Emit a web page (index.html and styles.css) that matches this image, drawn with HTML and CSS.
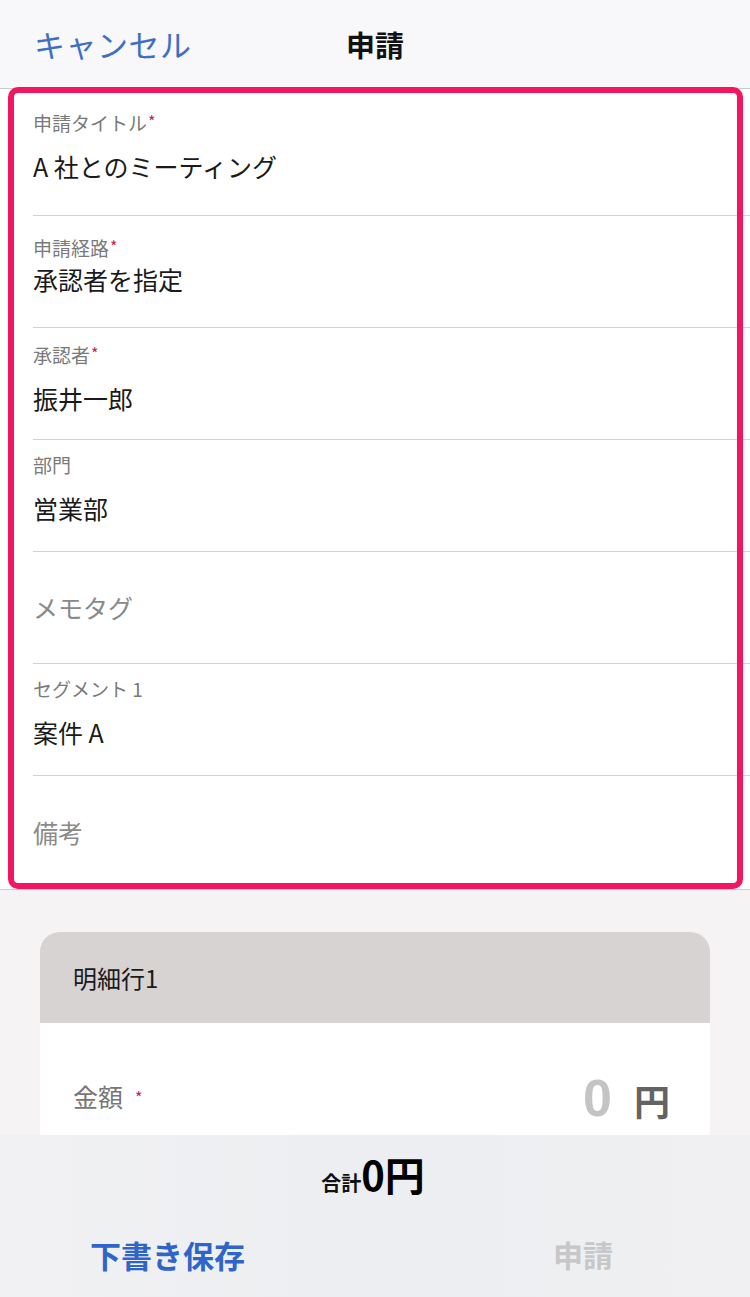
FILE: index.html
```html
<!DOCTYPE html>
<html lang="ja">
<head>
<meta charset="utf-8">
<title>申請</title>
<link rel="stylesheet" href="styles.css">
</head>
<body>
<div class="page">
  <header class="topbar">
    <span class="cancel">キャンセル</span>
    <span class="title">申請</span>
  </header>

  <section class="form">
    <div class="row row-first">
      <div class="label">申請タイトル<span class="req">*</span></div>
      <div class="value">A 社とのミーティング</div>
    </div>
    <div class="row row-tight">
      <div class="label">申請経路<span class="req">*</span></div>
      <div class="value">承認者を指定</div>
    </div>
    <div class="row">
      <div class="label">承認者<span class="req">*</span></div>
      <div class="value">振井一郎</div>
    </div>
    <div class="row">
      <div class="label">部門</div>
      <div class="value">営業部</div>
    </div>
    <div class="row row-placeholder">
      <div class="placeholder">メモタグ</div>
    </div>
    <div class="row">
      <div class="label">セグメント 1</div>
      <div class="value">案件 A</div>
    </div>
    <div class="row row-placeholder row-last">
      <div class="placeholder">備考</div>
    </div>
    <div class="highlight"></div>
  </section>

  <section class="details">
    <div class="card">
      <div class="card-head">明細行1</div>
      <div class="card-body">
        <div class="amount-row">
          <div class="amount-label">金額<span class="req req-gap">*</span></div>
          <div class="amount-value"><span class="num">0</span><span class="yen">円</span></div>
        </div>
      </div>
    </div>
  </section>

  <footer class="bottombar">
    <div class="total"><span class="total-label">合計</span><span class="total-value">0円</span></div>
    <div class="actions">
      <span class="draft">下書き保存</span>
      <span class="submit">申請</span>
    </div>
  </footer>
</div>
</body>
</html>
```

FILE: styles.css
```css
* { box-sizing: border-box; }
html, body {
  margin: 0;
  padding: 0;
}
body {
  width: 750px;
  height: 1297px;
  overflow: hidden;
  background: #f5f3f4;
  font-family: "Noto Sans CJK JP", "Noto Sans", sans-serif;
  color: #1a1a1a;
}
.page {
  position: relative;
  height: 1297px;
}

.topbar {
  height: 89px;
  background: #f8f7f9;
  border-bottom: 1px solid #c9c9c9;
  display: flex;
  align-items: center;
  position: relative;
  padding-left: 34px;
}
.cancel {
  font-size: 31px;
  color: #3d6fc3;
  line-height: 40px;
  letter-spacing: 0.5px;
}
.title {
  position: absolute;
  left: 0;
  right: 0;
  text-align: center;
  font-size: 29px;
  font-weight: 700;
  line-height: 40px;
  pointer-events: none;
  color: #111;
}

.form {
  position: relative;
  background: #fff;
  border-bottom: 1px solid #cfcfcf;
}
.row {
  margin-left: 33px;
  height: 112px;
  border-bottom: 1px solid #d2d2d2;
  display: flex;
  flex-direction: column;
  padding-top: 12px;
}
.row-first {
  height: 127px;
  padding-top: 19px;
}
.row-tight {
  padding-top: 17px;
}
.row-tight .value {
  margin-top: 0;
}
.row-last {
  border-bottom: none;
  height: 113px;
}
.label {
  font-size: 19px;
  line-height: 26px;
  color: #7a7a7a;
}
.req {
  color: #c2264a;
  font-size: 16px;
  vertical-align: 3px;
  margin-left: 1px;
}
.req-gap {
  margin-left: 12px;
}
.value {
  margin-top: 12px;
  font-size: 25px;
  line-height: 36px;
  color: #1a1a1a;
}
.row-placeholder {
  justify-content: center;
  padding-top: 0;
  padding-bottom: 2px;
}
.placeholder {
  font-size: 25px;
  line-height: 36px;
  color: #8a8a8a;
}

.highlight {
  position: absolute;
  left: 8px;
  top: -2px;
  width: 735px;
  height: 802px;
  border: 6px solid #f3155e;
  border-radius: 10px;
  pointer-events: none;
}

.details {
  padding: 42px 40px 0;
}
.card {
  border-radius: 20px 20px 0 0;
  overflow: hidden;
}
.card-head {
  height: 91px;
  background: #d8d3d3;
  display: flex;
  align-items: center;
  padding-left: 33px;
  font-size: 24px;
  color: #1a1a1a;
}
.card-body {
  background: #fff;
  height: 220px;
  padding: 0 40px 0 33px;
}
.amount-row {
  height: 146px;
  display: flex;
  align-items: center;
  justify-content: space-between;
}
.amount-label {
  font-size: 25px;
  color: #777;
  line-height: 36px;
}
.amount-value {
  display: flex;
  align-items: baseline;
  gap: 20px;
  margin-top: 4px;
}
.num {
  font-family: "Liberation Sans", "Noto Sans", sans-serif;
  font-size: 52px;
  font-weight: 700;
  color: #c4c4c4;
  letter-spacing: 2px;
}
.yen {
  font-size: 36px;
  font-weight: 700;
  color: #636363;
}

.bottombar {
  position: absolute;
  left: 0;
  right: 0;
  bottom: 0;
  height: 162px;
  background: linear-gradient(90deg, #f1f1f3 0%, #eceef1 50%, #f0f0f2 100%);
  display: flex;
  flex-direction: column;
  align-items: stretch;
}
.total {
  display: flex;
  justify-content: center;
  align-items: baseline;
  padding-top: 14px;
  padding-right: 4px;
  height: 80px;
}
.total-label {
  font-size: 20px;
  font-weight: 700;
  color: #111;
}
.total-value {
  font-size: 40px;
  font-weight: 700;
  color: #000;
  line-height: 50px;
}
.actions {
  display: flex;
  align-items: center;
  height: 82px;
  padding-bottom: 4px;
}
.draft {
  font-size: 31px;
  font-weight: 700;
  color: #2f65c9;
  margin-left: 90px;
}
.submit {
  font-size: 30px;
  font-weight: 700;
  color: #c7c7c7;
  margin-left: auto;
  margin-right: 137px;
}
```
